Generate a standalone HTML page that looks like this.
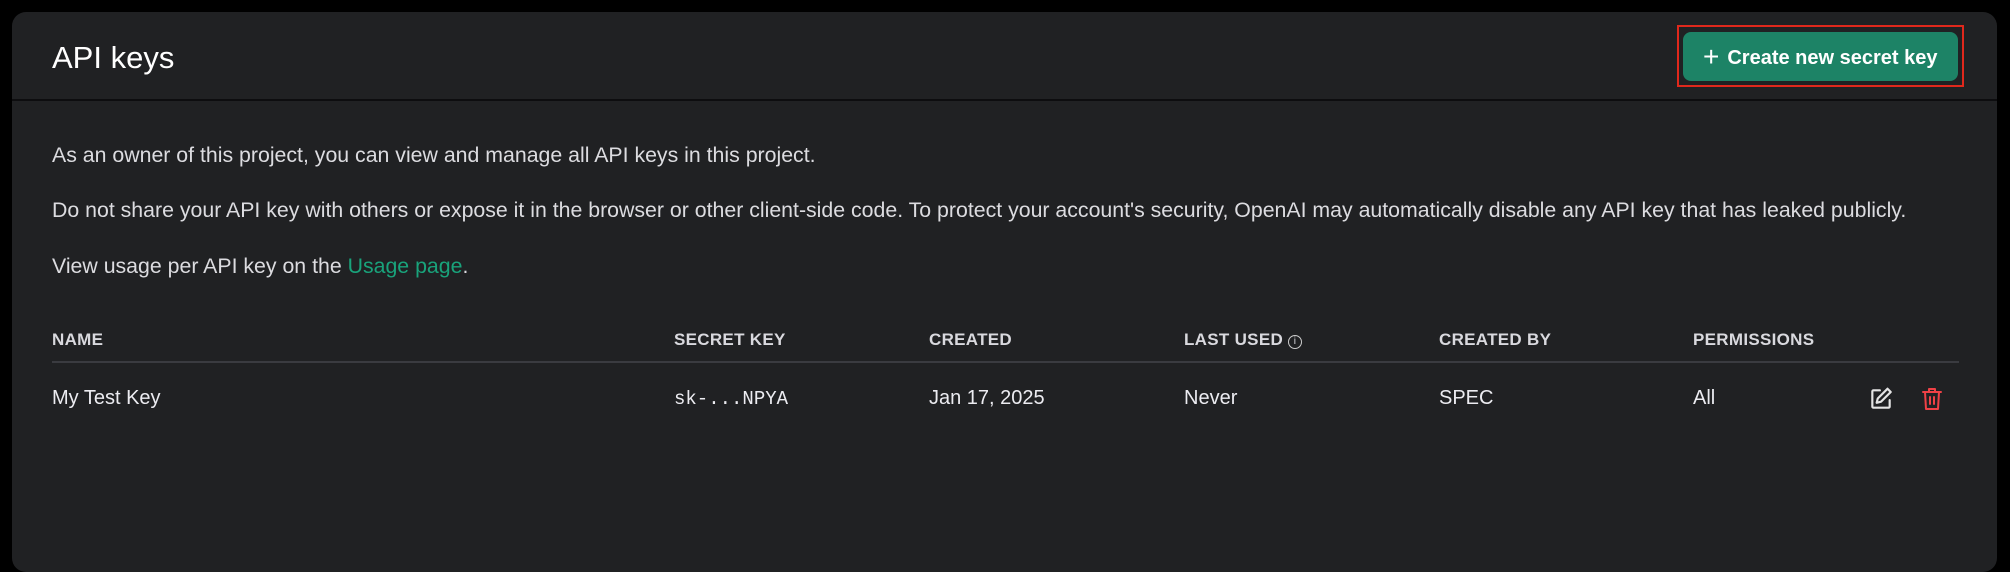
<!DOCTYPE html>
<html><head><style>
body{margin:0;width:2010px;height:546px;background:#000;overflow:hidden;font-family:"Liberation Sans",sans-serif;color:#ececf1}
.panel{position:absolute;left:12px;top:12px;width:1985px;height:560px;background:#202123;border-radius:14px}
.t{position:absolute;white-space:nowrap}
.hline{position:absolute;left:12px;top:99px;width:1985px;height:2px;background:#0d0d0f}
.p{font-size:21.3px;color:#dcdce0}
.h{font-size:17px;font-weight:bold;color:#d9d9de;letter-spacing:0.3px}
.r{font-size:20px;color:#ececf1}
</style></head><body>
<div class="panel"></div>
<div class="hline"></div>
<div class="t" style="left:52px;top:40px;font-size:31px;color:#fff">API keys</div>
<div style="position:absolute;left:1677px;top:25px;width:287px;height:62px;border:2px solid #e0281c;box-sizing:border-box"></div>
<div style="position:absolute;left:1683px;top:32px;width:275px;height:49px;background:#1d8366;border-radius:8px;color:#fff;font-size:20px;font-weight:bold;line-height:49px;box-sizing:border-box;padding-left:20px">
<span style="font-weight:normal;font-size:28px;vertical-align:-2px;margin-right:8px">+</span>Create new secret key</div>
<div class="t p" style="left:52px;top:143px">As an owner of this project, you can view and manage all API keys in this project.</div>
<div class="t p" style="left:52px;top:198px">Do not share your API key with others or expose it in the browser or other client-side code. To protect your account's security, OpenAI may automatically disable any API key that has leaked publicly.</div>
<div class="t p" style="left:52px;top:254px">View usage per API key on the <span style="color:#19a37b">Usage page</span>.</div>
<div class="t h" style="left:52px;top:330px">NAME</div>
<div class="t h" style="left:674px;top:330px">SECRET KEY</div>
<div class="t h" style="left:929px;top:330px">CREATED</div>
<div class="t h" style="left:1184px;top:330px">LAST USED <span style="display:inline-block;width:12px;height:12px;border:1.5px solid #ccc;border-radius:50%;font-size:10px;line-height:12px;text-align:center;vertical-align:1px;font-weight:normal">i</span></div>
<div class="t h" style="left:1439px;top:330px">CREATED BY</div>
<div class="t h" style="left:1693px;top:330px">PERMISSIONS</div>
<div style="position:absolute;left:52px;top:361px;width:1907px;height:2px;background:#3a3b40"></div>
<div class="t r" style="left:52px;top:387px">My Test Key</div>
<div class="t r" style="left:674px;top:388px;font-family:'Liberation Mono',monospace;font-size:19px">sk-...NPYA</div>
<div class="t r" style="left:929px;top:387px">Jan 17, 2025</div>
<div class="t r" style="left:1184px;top:387px">Never</div>
<div class="t r" style="left:1439px;top:387px">SPEC</div>
<div class="t r" style="left:1693px;top:387px">All</div>
<svg style="position:absolute;left:1868px;top:386px" width="26" height="26" viewBox="0 0 24 24" fill="none" stroke="#e5e5e5" stroke-width="2" stroke-linecap="round" stroke-linejoin="round"><path d="M11 4H5a1 1 0 0 0-1 1v14a1 1 0 0 0 1 1h14a1 1 0 0 0 1-1v-6"/><path d="M18 2.5l3 3L12 14.5l-4 1 1-4z"/></svg>
<svg style="position:absolute;left:1920px;top:386px" width="24" height="26" viewBox="0 0 24 26" fill="none" stroke="#ef4146" stroke-width="2" stroke-linecap="round" stroke-linejoin="round"><path d="M3 6h18M9 6V3h6v3M5 6l1 17h12l1-17M10 11v7M14 11v7"/></svg>
</body></html>
